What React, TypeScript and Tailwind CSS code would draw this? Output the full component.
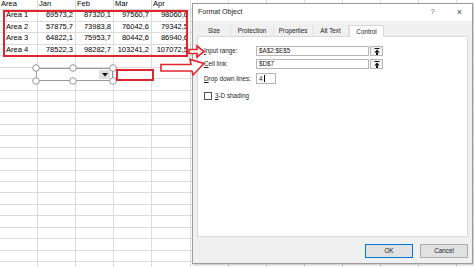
import React from "react";

const colWidths = [38, 38, 38, 38, 39, 38, 38, 38, 38, 38, 38, 38, 38];

const sheet: string[][] = [
  ["Area", "Jan", "Feb", "Mar", "Apr"],
  ["Area 1", "69573,2", "87320,1", "97560,7", "98060,6"],
  ["Area 2", "57875,7", "73983,8", "76042,6", "79342,5"],
  ["Area 3", "64822,1", "75953,7", "80442,6", "86940,6"],
  ["Area 4", "78522,3", "98282,7", "103241,2", "107072,5"],
];

const ROWS = 24;

export default function App() {
  return (
    <div className="relative h-[267px] w-[474px] overflow-hidden bg-white font-['Liberation_Sans',Arial,sans-serif] text-black">
      <Sheet />

      {/* red frame round the source range */}
      <div className="absolute left-[3px] top-[10px] h-[47px] w-[185px] border-2 border-[#e0252e]" />

      <ComboControl />

      {/* red linked cell */}
      <div className="absolute left-[116px] top-[69px] h-[12px] w-[38px] border-2 border-[#e0252e] bg-white" />

      <FormatDialog />

      <Arrows />
    </div>
  );
}

function Sheet() {
  return (
    <div className="-mt-px flex flex-col">
      {Array.from({ length: ROWS }).map((_, r) => (
        <div key={r} className="flex h-[11.45px]">
          {colWidths.map((w, c) => {
            const value = sheet[r]?.[c] ?? "";
            const numeric = r > 0 && c > 0;
            return (
              <div
                key={c}
                style={{ width: w }}
                className={
                  "shrink-0 overflow-hidden whitespace-nowrap border-b border-r border-[#dcdcdc] text-[7.5px] leading-[10.5px] " +
                  (numeric ? "pr-[2px] text-right" : r > 0 ? "pl-[6px]" : "pl-[1px]")
                }
              >
                {value}
              </div>
            );
          })}
        </div>
      ))}
    </div>
  );
}

function ComboControl() {
  const handles = [
    [36, 68],
    [73, 68],
    [113, 68],
    [36, 81],
    [73, 81],
    [113, 81],
  ];
  return (
    <div className="absolute left-[30px] top-[62px] h-[26px] w-[90px]">
      <div className="absolute left-[6px] top-[6px] h-[13px] w-[77px] border border-[#9a9a9a] bg-white" />
      <div className="absolute left-[69px] top-[8px] flex h-[9px] w-[11px] items-center justify-center bg-[#dedede]">
        <svg width="6" height="4" viewBox="0 0 6 4">
          <path d="M0 0 L6 0 L3 3.5 Z" fill="#111" />
        </svg>
      </div>
      <svg className="absolute left-0 top-0" width="90" height="26">
        {handles.map(([x, y], i) => (
          <circle key={i} cx={x - 30} cy={y - 62} r="3.3" fill="#fff" stroke="#8c8c8c" strokeWidth="0.9" />
        ))}
      </svg>
    </div>
  );
}

function FormatDialog() {
  const tabs = ["Size", "Protection", "Properties", "Alt Text", "Control"];
  const tabWidths = [33, 43, 39, 36, 35];
  return (
    <div className="absolute left-[192px] top-[3px] flex h-[261px] w-[281px] flex-col border border-[#9c9c9c] bg-[#f0f0f0] shadow-[1px_1px_2px_rgba(0,0,0,0.25)]">
      <div className="flex h-[17px] shrink-0 items-center bg-white pl-[5px] pr-[10px]">
        <span className="text-[7px] text-[#222]">Format Object</span>
        <span className="ml-auto text-[7px] text-[#555]">?</span>
        <span className="ml-[22px] text-[9px] leading-none text-[#444]">×</span>
      </div>

      <div className="flex flex-1 flex-col px-[4px]">
        <div className="flex h-[15px] shrink-0 items-end pl-[1px]">
          {tabs.map((t, i) => {
            const active = t === "Control";
            return (
              <div
                key={t}
                style={{ width: tabWidths[i] }}
                className={
                  "flex items-center justify-center text-[6.3px] text-[#222] " +
                  (active
                    ? "relative -mb-px h-[12px] border border-b-0 border-[#d9d9d9] bg-white"
                    : "h-[11px] border-r border-[#e2e2e2]")
                }
              >
                {t}
              </div>
            );
          })}
        </div>

        <div className="flex h-[201px] shrink-0 flex-col border border-[#d9d9d9] bg-white pl-[6px] pt-[9px] text-[6.3px] text-[#222]">
          <div className="flex flex-col gap-[3px]">
            <FieldRow label="Input range:" accel="I" value="$A$2:$E$5" />
            <FieldRow label="Cell link:" accel="C" value="$D$7" />
            <div className="mt-[1px] flex h-[11px] items-center">
              <span className="w-[52px]">
                <u>D</u>rop down lines:
              </span>
              <div className="flex h-[11px] w-[20px] items-center border border-[#b5b5b5] pl-[2px]">
                4<span className="ml-[1px] h-[7px] w-px bg-black" />
              </div>
            </div>
          </div>
          <div className="mt-[7px] flex items-center">
            <span className="h-[8px] w-[8px] border border-[#555]" />
            <span className="ml-[3px]">
              <u>3</u>-D shading
            </span>
          </div>
        </div>

        <div className="mt-[7px] flex justify-end gap-[7px]">
          <button className="flex h-[14px] w-[48px] items-center justify-center border border-[#0078d7] bg-[#e1e1e1] text-[6.3px] text-[#222]">
            OK
          </button>
          <button className="flex h-[14px] w-[48px] items-center justify-center border border-[#adadad] bg-[#e1e1e1] text-[6.3px] text-[#222]">
            Cancel
          </button>
        </div>
      </div>
    </div>
  );
}

function FieldRow({ label, accel, value }: { label: string; accel: string; value: string }) {
  return (
    <div className="flex h-[10px] items-center">
      <span className="w-[52px]">
        <u>{accel}</u>
        {label.slice(1)}
      </span>
      <div className="flex h-[10px] w-[113px] items-center border border-[#b5b5b5] pl-[2px]">{value}</div>
      <div className="ml-px flex h-[10px] w-[13px] items-center justify-center border border-[#b5b5b5] bg-[#f2f2f2]">
        <svg width="6" height="7" viewBox="0 0 6 7">
          <rect x="0.5" y="0" width="5" height="1" fill="#111" />
          <path d="M3 1.6 L5.6 4.4 L0.4 4.4 Z" fill="#111" />
          <rect x="2" y="4.4" width="2" height="2.6" fill="#111" />
        </svg>
      </div>
    </div>
  );
}

function Arrows() {
  return (
    <svg className="absolute left-[155px] top-[40px]" width="56" height="42" viewBox="0 0 56 42">
      <polygon
        points="34,9.5 42,9.5 42,6 49,11.5 42,17 42,13.5 34,13.5"
        fill="#fff"
        stroke="#e0252e"
        strokeWidth="1.6"
        strokeLinejoin="miter"
      />
      <polygon
        points="6,24.5 36,24.5 35,19.5 49,23.5 38,35 37,31 6,31"
        fill="#fff"
        stroke="#e0252e"
        strokeWidth="1.6"
        strokeLinejoin="miter"
      />
    </svg>
  );
}
